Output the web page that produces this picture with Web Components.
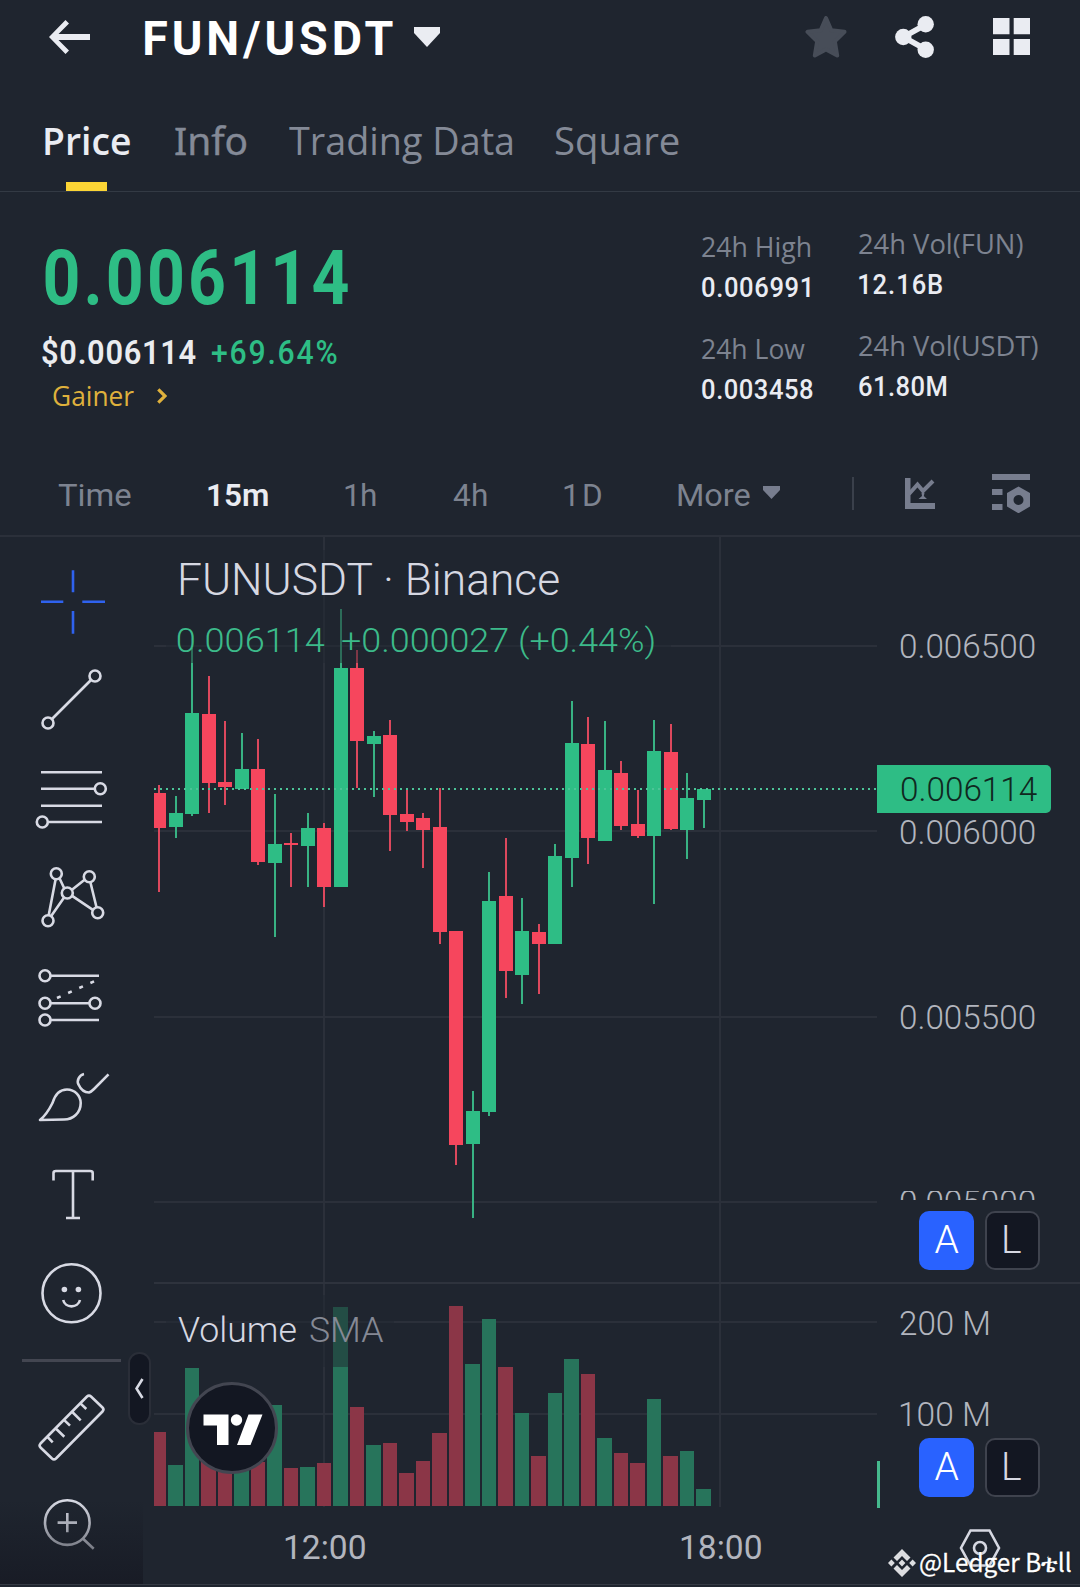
<!DOCTYPE html>
<html lang="en">
<head>
<meta charset="utf-8">
<title>FUN/USDT</title>
<style>
html, body {
	margin: 0;
	background: #1f252f;
}

body {
	width: 1080px;
	height: 1587px;
	overflow: hidden;
	font-family: Roboto, "Liberation Sans", sans-serif;
	color: #eaecef;
}
</style>
</head>
<body>
<trade-page></trade-page>

<script>
const GREEN = "#2ebd85";
const RED = "#f6465d";

//Small helper: attach an open root with the given markup
class BaseElement extends HTMLElement {
	connectedCallback() {
		if (this.shadowRoot) return;
		const template = document.createElement("template");
		template.innerHTML = this.render().trim();
		this.attachShadow({ mode: "open" });
		this.shadowRoot.appendChild(template.content.cloneNode(true));
		this.ready();
	}

	ready() {}
}

//Text whose box is its cap height, fitted to a width.
//"track" gives the glyph scale and spreads the letters, otherwise the glyphs are scaled.
class FitText extends BaseElement {
	render() {
		return `
<style>
:host {
	display: block;
	flex: none;
	line-height: .711em;
}
span { display: block; width: max-content; transform-origin: 0 50%; white-space: pre; }
</style>
<span><slot></slot></span>`;
	}

	ready() {
		const width = Number(this.getAttribute("w"));
		const size = this.getAttribute("size");
		this.style.fontSize = size + "px";
		this.style.width = width + "px";
		this.style.height = Math.round(size * 0.711) + "px";

		const style = getComputedStyle(this);
		const ctx = document.createElement("canvas").getContext("2d");
		ctx.font = `${style.fontWeight} ${size}px ${style.fontFamily}`;
		const text = this.textContent;
		const box = ctx.measureText(text);
		const ink = box.actualBoundingBoxLeft + box.actualBoundingBoxRight;
		const span = this.shadowRoot.querySelector("span");
		let scale = width / ink;
		if (this.hasAttribute("track")) {
			scale = Number(this.getAttribute("track")) || 1;
			span.style.letterSpacing = (width / scale - ink) / (text.length - 1) + "px";
		}
		span.style.transform = `translateX(${box.actualBoundingBoxLeft * scale}px) scaleX(${scale})`;
	}
}

class AppHeader extends BaseElement {
	render() {
		return `
<style>
:host { display: flex; align-items: center; height: 76px; padding: 0 50px 0 49px; }
svg { display: block; flex: none; margin-bottom: 3px; fill: #eaecf2; }
fit-text { color: #fff; font-weight: 700; margin: 2px 21px 0 55px; }
.star { margin-left: auto; fill: #474d58; stroke: #474d58; }
.share { margin: 0 59px 3px 48px; stroke: #eaecf2; }
</style>
<svg width="41" height="34" viewBox="0 0 41 34"><path d="M0 17 16.5 0 20 3.6 9.5 14H41v6H9.5L20 30.4 16.5 34Z"/></svg>
<fit-text size="49" w="248" track=".95">FUN/USDT</fit-text>
<svg width="26" height="20" viewBox="0 0 26 20"><path d="M0 0H26V6L13 20 0 6Z"/></svg>
<svg class="star" width="42" height="42" viewBox="0 0 42 42"><path stroke-width="4" stroke-linejoin="round" d="M21 2 26.3 14.2 39.5 15.8 29.8 25.2 32.2 39.5 21 33.6 9.8 39.5 12.2 25.2 2.5 15.8 15.7 14.2Z"/></svg>
<svg class="share" width="39" height="42" viewBox="0 0 39 42"><path d="M31 8.5 8.3 21 31 33.5" fill="none" stroke-width="5.5"/><g stroke="none"><circle cx="8.3" cy="21" r="8.2"/><circle cx="30.7" cy="8.3" r="8.2"/><circle cx="30.7" cy="33.7" r="8.2"/></g></svg>
<svg width="37" height="37" viewBox="0 0 37 37"><path d="M0 0H16.5V16.3H0ZM20.7 0H37V16.3H20.7ZM0 21H16.5V37H0ZM20.7 21H37V37H20.7Z"/></svg>`;
	}
}

class TabBar extends BaseElement {
	render() {
		return `
<style>
:host {
	display: flex;
	gap: 42px;
	box-sizing: border-box;
	height: 116px;
	padding: 51px 0 0 45px;
	border-bottom: 1px solid #333a44;
	font-family: "Open Sans", sans-serif;
	font-weight: 500;
	color: #848a97;
}
.active { color: #eaecf2; font-weight: 600; margin-right: 2px; }
.active i { display: block; width: 41px; height: 9px; margin: 28px 0 0 21px; background: #fcd535; }
.info { font-family: "Noto Sans", sans-serif; font-weight: 400; margin-right: 1px; -webkit-text-stroke: .4px #848a97; }
</style>
<div class="active"><fit-text size="38" w="85.5">Price</fit-text><i></i></div>
<fit-text class="info" size="38" w="71">Info</fit-text>
<fit-text size="38" w="224">Trading Data</fit-text>
<fit-text size="38" w="124">Square</fit-text>`;
	}
}

class StatCell extends BaseElement {
	render() {
		return `
<style>
:host { display: block; height: 102px; color: #7d8390; }
slot[name=value]::slotted(*) { margin-top: 22px; color: #eaecf2; font-weight: 500; }
.label { font-family: "Open Sans", sans-serif; }
</style>
<div class="label"><slot></slot></div>
<slot name="value"></slot>`;
	}
}

class PriceSummary extends BaseElement {
	render() {
		return `
<style>
:host { display: grid; grid-template-columns: 702px 157px 1fr; height: 261px; }
.quote { padding: 59px 0 0 42px; }
.last { margin-left: 3px; color: ${GREEN}; font-weight: 700; }
.row { display: flex; gap: 16px; margin-top: 36px; font-weight: 600; }
.change { color: ${GREEN}; font-weight: 500; }
.tag { display: flex; gap: 23px; align-items: center; margin: 21px 0 0 11px; color: #dfb13c; font-family: "Open Sans", sans-serif; }
.high { padding-top: 45px; }
.vol { padding-top: 42px; }
</style>
<div class="quote">
	<fit-text class="last" size="76" w="303" track=".87">0.006114</fit-text>
	<div class="row">
		<fit-text size="33.5" w="154" track=".92">$0.006114</fit-text>
		<fit-text class="change" size="33.5" w="125" track=".9">+69.64%</fit-text>
	</div>
	<div class="tag">
		<fit-text size="27" w="81">Gainer</fit-text>
		<svg width="10" height="16" viewBox="0 0 10 16"><path d="M1.3 1.3 8 8 1.3 14.7" fill="none" stroke="currentColor" stroke-width="3.2"/></svg>
	</div>
</div>
<div class="high">
	<stat-cell><fit-text size="27" w="108.5">24h High</fit-text><fit-text slot="value" size="27.5" w="108" track=".93">0.006991</fit-text></stat-cell>
	<stat-cell><fit-text size="27" w="103">24h Low</fit-text><fit-text slot="value" size="27.5" w="111" track=".93">0.003458</fit-text></stat-cell>
</div>
<div class="vol">
	<stat-cell><fit-text size="27" w="163.5">24h Vol(FUN)</fit-text><fit-text slot="value" size="27.5" w="83" track=".93">12.16B</fit-text></stat-cell>
	<stat-cell><fit-text size="27" w="178.5">24h Vol(USDT)</fit-text><fit-text slot="value" size="27.5" w="88" track=".93">61.80M</fit-text></stat-cell>
</div>`;
	}
}

class IntervalBar extends BaseElement {
	render() {
		return `
<style>
:host { display: flex; align-items: center; gap: 77px; box-sizing: border-box; height: 82px; padding: 3px 0 0 58px; color: #7d8390; }
.on { color: #eaecf2; font-weight: 600; }
.more, .tools { display: flex; align-items: center; }
.more { gap: 13px; }
.more svg { margin-bottom: 6px; }
.tools { margin: 0 0 4px -5px; }
hr { width: 2px; height: 33px; margin: 0 51px 0 0; border: 0; background: #3a404b; }
svg { display: block; fill: #777d8e; }
.tools svg + svg { margin-left: 57px; }
</style>
<fit-text size="31.5" w="73">Time</fit-text>
<fit-text class="on" size="31.5" w="60">15m</fit-text>
<fit-text size="31.5" w="31" track>1h</fit-text>
<fit-text size="31.5" w="34" track>4h</fit-text>
<fit-text size="31.5" w="37" track>1D</fit-text>
<div class="more"><fit-text size="31.5" w="72">More</fit-text><svg width="17" height="13" viewBox="0 0 17 13"><path d="M0 0H17V4L8.5 13 0 4Z"/></svg></div>
<div class="tools">
	<hr>
	<svg width="30" height="31" viewBox="0 0 30 31"><path d="M0 0H5.5V25H30V31H0Z"/><path d="M4 16 12.5 6.5 18 13 28 3" fill="none" stroke="#777d8e" stroke-width="4"/><path d="M16.5 15H19.5L18.8 18 22 21H13.5L17 18Z"/></svg>
	<svg width="38" height="39" viewBox="0 0 38 39"><path d="M0 0H38V6H0ZM0 15H10.5V21H0ZM0 30H10.5V36H0Z"/><path fill-rule="evenodd" d="M26.5 12.5 38 19V32.5L26.5 39.3 15 32.5V19ZM26.5 21A5 5 0 1 0 26.5 31 5 5 0 1 0 26.5 21Z"/></svg>
</div>`;
	}
}

//Drawing tools. Every slot is 99px tall, the shapes use page coordinates.
const TOOLS = [
	`<path stroke="#2f62ee" d="M73 570.3V592.3M73 611V633.7M41 601.7H63.3M82.3 601.7H105"/>`,
	`<circle cx="48" cy="723" r="5.5"/><circle cx="95" cy="676" r="5.5"/><path d="M52 719 91 680"/>`,
	`<path d="M41 772.3H102M41 788.7H94.6M41 805.7H102M48 822H102"/><circle cx="100.3" cy="788.7" r="5.5"/><circle cx="42.3" cy="822" r="5.5"/>`,
	`<g><circle cx="56.3" cy="873.7" r="5.5"/><circle cx="89.3" cy="876.7" r="5.5"/><circle cx="67.3" cy="893" r="5.5"/><circle cx="48" cy="920.7" r="5.5"/><circle cx="97.7" cy="912.7" r="5.5"/></g><path d="M59.5 878.3 64.2 888.3M72 889.7 84.6 879.8M90.4 882.2 96.5 907.2M92.9 909.8 72.1 895.9M64.1 897.6 51.2 916.1M48.7 915.2 55.6 879.2"/>`,
	`<circle cx="45" cy="975.7" r="5.5"/><circle cx="45" cy="1003.3" r="5.5"/><circle cx="95" cy="1003.3" r="5.5"/><circle cx="45" cy="1020" r="5.5"/><path d="M50.5 975.7H99M50.5 1003.3H89.5M50.5 1020H99"/><path stroke-dasharray="4 8.2" d="M57 998 96 980.5"/>`,
	`<path stroke-linejoin="round" d="M40 1120C45 1116 50 1108 52.5 1103 54 1098 57 1089.5 67 1089.5 75 1089.5 80.7 1096 80.7 1103 80.7 1113 73 1119.5 64 1119.5ZM84 1074C79 1075 76.5 1081 78.5 1084.5 81 1090 84 1092.5 89 1092.5 91 1092 92 1091 94 1089L108.5 1074.3"/>`,
	`<path d="M53.5 1180.6V1173Q53.5 1171 56 1171H90Q92.7 1171 92.7 1173V1180.6M73 1171V1218M66 1218H80"/>`,
	`<circle cx="71.5" cy="1293.3" r="29"/><path d="M63.2 1300C65 1308.5 78 1308.5 80 1300"/><g fill="#d8dae4" stroke="none"><circle cx="64.4" cy="1289.5" r="2.8"/><circle cx="78.4" cy="1289.5" r="2.8"/></g>`,
	`<path stroke-linejoin="round" d="M87 1396.5Q89 1394.6 91 1396.5L102.5 1407.5Q104.4 1409.5 102.5 1411.5L56 1458.5Q54 1460.3 52 1458.5L40.5 1447.5Q38.7 1445.5 40.5 1443.5ZM47 1436.4 52.7 1442.3M55.3 1428 64.3 1436.7M63.7 1419.6 70 1425.6M72.3 1412 80.7 1420.3M80.7 1403.6 86.3 1409"/>`,
	`<circle cx="67.3" cy="1522.6" r="22.3"/><path d="M57.6 1522.6H77M67.3 1512.9V1532.3M83.3 1539 93.7 1548.7"/>`
];

class DrawToolbar extends BaseElement {
	render() {
		const slots = TOOLS.map((shape, i) => {
			const top = i < 8 ? 552 + 99 * i : 1378 + 99 * (i - 8);
			const rule = i == 8 ? "<hr>" : "";
			return `${rule}<svg width="154" height="99" viewBox="0 ${top} 154 99">${shape}</svg>`;
		}).join("");
		return `
<style>
:host { display: block; position: relative; padding-top: 15px; }
svg { display: block; fill: none; stroke: #d8dae4; stroke-width: 2.6; }
hr { width: 99px; height: 3px; margin: 15px 0 16px 22px; border: 0; background: #434651; }
.fade { position: absolute; left: 0; bottom: 0; width: 143px; height: 84px; background: linear-gradient(#171a2400, #171a24d8); }
.collapse {
	position: absolute;
	left: 128px;
	top: 815px;
	display: grid;
	place-items: center;
	box-sizing: border-box;
	width: 23px;
	height: 73px;
	border: 2px solid #2a2e38;
	border-radius: 11px;
	background: #131722;
}
</style>
${slots}
<div class="fade"></div>
<div class="collapse"><svg width="9" height="21" viewBox="0 0 9 21"><path d="M7.5 1 1.5 10.5 7.5 20"/></svg></div>`;
	}
}

//[wick top, body top, body bottom, wick bottom, volume top, up]
const CANDLES = [
	[785, 793, 828, 892, 1432, 0],
	[796, 813, 827, 838, 1465, 1],
	[648, 713, 814, 816, 1368, 1],
	[676, 714, 783, 813, 1460, 0],
	[721, 782, 787, 805, 1470, 0],
	[733, 769, 789, 789, 1470, 1],
	[739, 769, 862, 865, 1462, 0],
	[794, 844, 863, 937, 1405, 1],
	[833, 843, 845, 887, 1468, 0],
	[813, 828, 846, 887, 1467, 1],
	[823, 828, 887, 907, 1463, 0],
	[609, 668, 887, 887, 1307, 1],
	[650, 668, 741, 788, 1407, 0],
	[731, 736, 744, 797, 1445, 1],
	[720, 735, 815, 851, 1443, 0],
	[790, 814, 822, 831, 1473, 0],
	[813, 818, 830, 868, 1461, 0],
	[788, 827, 932, 944, 1433, 0],
	[931, 931, 1145, 1165, 1306, 0],
	[1091, 1111, 1144, 1218, 1364, 1],
	[872, 901, 1112, 1116, 1319, 1],
	[838, 896, 971, 998, 1367, 0],
	[898, 931, 975, 1004, 1413, 1],
	[924, 932, 944, 994, 1456, 0],
	[844, 856, 944, 944, 1393, 1],
	[701, 743, 858, 887, 1359, 1],
	[717, 744, 838, 864, 1374, 0],
	[721, 770, 841, 841, 1438, 1],
	[761, 773, 826, 830, 1453, 0],
	[790, 824, 836, 838, 1463, 0],
	[720, 751, 836, 904, 1399, 1],
	[724, 752, 829, 830, 1456, 0],
	[773, 798, 830, 859, 1451, 1],
	[789, 789, 800, 828, 1489, 1]
];

class CandleChart extends BaseElement {
	render() {
		let bars = "";
		CANDLES.forEach(([high, top, bottom, low, volume, up], i) => {
			const x = 159 + 16.5 * i;
			const mid = Math.round(x);
			const left = Math.floor(x) - 7;
			bars += `<rect x="${left}" y="${volume}" width="${mid + 7 - left}" height="${1506 - volume}" fill="${up ? "#27745b" : "#8b3647"}"/>`;
			bars += `<rect x="${mid - 1}" y="${high}" width="2" height="${low - high}" fill="${up ? "#38b283" : "#dc485d"}"/>`;
			bars += `<rect x="${mid - 7}" y="${top}" width="14" height="${bottom - top}" fill="${up ? GREEN : RED}"/>`;
		});
		return `
<style>
:host { display: block; position: relative; }
svg { display: block; }
.legend { position: absolute; left: 12px; background: #1f252f80; font-weight: 300; color: #d6d8e2; }
.main { top: 13px; width: 505px; height: 113px; }
.main .title { margin: 15px 0 0 15px; }
.row { display: flex; gap: 17px; margin: 31px 0 0 12px; color: #3cba8a; }
.volume { display: flex; box-sizing: border-box; top: 758px; width: 228px; height: 72px; padding: 23px 0 0 12px; }
.sma { color: #858995; margin-left: 14px; }
.badge { position: absolute; left: 32px; top: 844px; }
.times { display: flex; padding: 24px 0 0 131px; gap: 316px; color: #b2b5be; }
</style>
<svg width="723" height="975" viewBox="154 537 723 975">
	<path stroke="#2b303a" stroke-width="2" d="M324 536V1507M720 536V1507M154 646H877M154 831H877M154 1017H877M154 1202H877M154 1322H877M154 1414H877"/>
	${bars}
	<path stroke="#4cc497" stroke-width="2" stroke-dasharray="2 4" d="M154 789H877"/>
	<path stroke="#2e333d" stroke-width="2" d="M154 1283H877"/>
</svg>
<div class="legend main">
	<fit-text class="title" size="44.5" w="379">FUNUSDT · Binance</fit-text>
	<div class="row">
		<fit-text size="34" w="147">0.006114</fit-text>
		<fit-text size="34" w="312">+0.000027 (+0.44%)</fit-text>
	</div>
</div>
<div class="legend volume">
	<fit-text size="34.5" w="118">Volume</fit-text>
	<fit-text class="sma" size="34.5" w="74">SMA</fit-text>
</div>
<svg class="badge" width="92" height="94" viewBox="187 1381 92 94">
	<circle cx="233" cy="1428" r="44.5" fill="#131722" stroke="#434651" stroke-width="3"/>
	<path fill="#fff" d="M204.5 1414.5H229.5V1445H218V1425.5H204.5ZM249.5 1414.5H263.5L251.5 1445H238Z"/>
	<circle cx="237.5" cy="1420" r="5.7" fill="#fff"/>
</svg>
<div class="times">
	<fit-text size="33" w="80">12:00</fit-text>
	<fit-text size="33" w="80">18:00</fit-text>
</div>`;
	}
}

class ScaleButtons extends BaseElement {
	render() {
		return `
<style>
:host { display: flex; gap: 11px; padding-left: 42px; font-weight: 300; color: #fff; }
div { display: grid; place-items: center; box-sizing: border-box; width: 55px; height: 59px; border-radius: 10px; }
.auto { background: #2962ff; }
.log { background: #131722; border: 2px solid #3f434e; color: #d6d8e2; }
</style>
<div class="auto"><fit-text size="39" w="24">A</fit-text></div>
<div class="log"><fit-text size="39" w="17">L</fit-text></div>`;
	}
}

class PriceAxis extends BaseElement {
	render() {
		return `
<style>
:host { display: block; color: #b2b5be; font-weight: 300; }
fit-text { margin-left: 23px; }
.price, .vol { display: flow-root; box-sizing: border-box; }
.price { height: 747px; border-bottom: 2px solid #2e333d; }
.now { display: flex; align-items: center; width: 174px; height: 48px; margin: 106px 0 8px; border-radius: 0 5px 5px 0; background: ${GREEN}; color: #10281f; }
.now fit-text { margin-left: 24px; }
.cut { height: 9px; overflow: hidden; margin: 161px 0 11px; }
.vol { height: 300px; }
.tick { width: 3px; height: 47px; background: #45b98d; margin-top: -36px; }
.gear { display: block; margin: 21px 0 0 82px; fill: none; stroke: #d6d8e2; stroke-width: 2.6; }
</style>
<div class="price">
	<fit-text style="margin-top:98px" size="33.5" w="134.5">0.006500</fit-text>
	<div class="now"><fit-text size="33" w="136">0.006114</fit-text></div>
	<fit-text size="33.5" w="134.5">0.006000</fit-text>
	<fit-text style="margin-top:161px" size="33.5" w="134.5">0.005500</fit-text>
	<div class="cut"><fit-text size="33.5" w="134.5">0.005000</fit-text></div>
	<scale-buttons></scale-buttons>
</div>
<div class="vol">
	<fit-text style="margin-top:28px" size="33.5" w="88">200 M</fit-text>
	<fit-text style="margin-top:67px" size="33.5" w="88">100 M</fit-text>
	<scale-buttons style="margin-top:11px"></scale-buttons>
	<div class="tick"></div>
	<svg class="gear" width="42" height="38" viewBox="0 0 42 38"><path d="M11.5 1.5H30.5L40 19 30.5 36.5H11.5L2 19Z"/><circle cx="21" cy="19" r="6"/></svg>
</div>`;
	}
}

class TradeChart extends BaseElement {
	render() {
		return `
<style>
:host { display: grid; grid-template-columns: 154px 723px 203px; height: 1047px; border-top: 2px solid #2b303a; border-bottom: 1px solid #353a44; }
</style>
<draw-toolbar></draw-toolbar>
<candle-chart></candle-chart>
<price-axis></price-axis>`;
	}
}

class UserMark extends BaseElement {
	render() {
		return `
<style>
:host {
	position: absolute;
	left: 888px;
	top: 1549px;
	display: flex;
	align-items: center;
	gap: 4px;
	color: #fff;
	font-family: "Noto Sans CJK SC", "Noto Sans", sans-serif;
	text-shadow: 0 0 2px #0006;
}
svg { fill: #dcdde0; }
fit-text { margin-bottom: 2px; -webkit-text-stroke: .3px #fff; }
</style>
<svg width="28" height="28" viewBox="0 0 28 28"><path d="M14 0 22.5 8.5 19 12 14 7 9 12 5.5 8.5ZM14 28 22.5 19.5 19 16 14 21 9 16 5.5 19.5ZM3.4 10.6 6.8 14 3.4 17.4 0 14ZM24.6 10.6 28 14 24.6 17.4 21.2 14ZM14 10.6 17.4 14 14 17.4 10.6 14Z"/></svg>
<fit-text size="25" w="151.5">@Ledger Bቴll</fit-text>`;
	}
}

class TradePage extends BaseElement {
	render() {
		return `
<style>
:host { display: block; position: relative; height: 1587px; overflow: hidden; }
</style>
<app-header></app-header>
<tab-bar></tab-bar>
<price-summary></price-summary>
<interval-bar></interval-bar>
<trade-chart></trade-chart>
<user-mark></user-mark>`;
	}
}

customElements.define("fit-text", FitText);
customElements.define("app-header", AppHeader);
customElements.define("tab-bar", TabBar);
customElements.define("stat-cell", StatCell);
customElements.define("price-summary", PriceSummary);
customElements.define("interval-bar", IntervalBar);
customElements.define("draw-toolbar", DrawToolbar);
customElements.define("candle-chart", CandleChart);
customElements.define("scale-buttons", ScaleButtons);
customElements.define("price-axis", PriceAxis);
customElements.define("trade-chart", TradeChart);
customElements.define("user-mark", UserMark);
customElements.define("trade-page", TradePage);
</script>
</body>
</html>
